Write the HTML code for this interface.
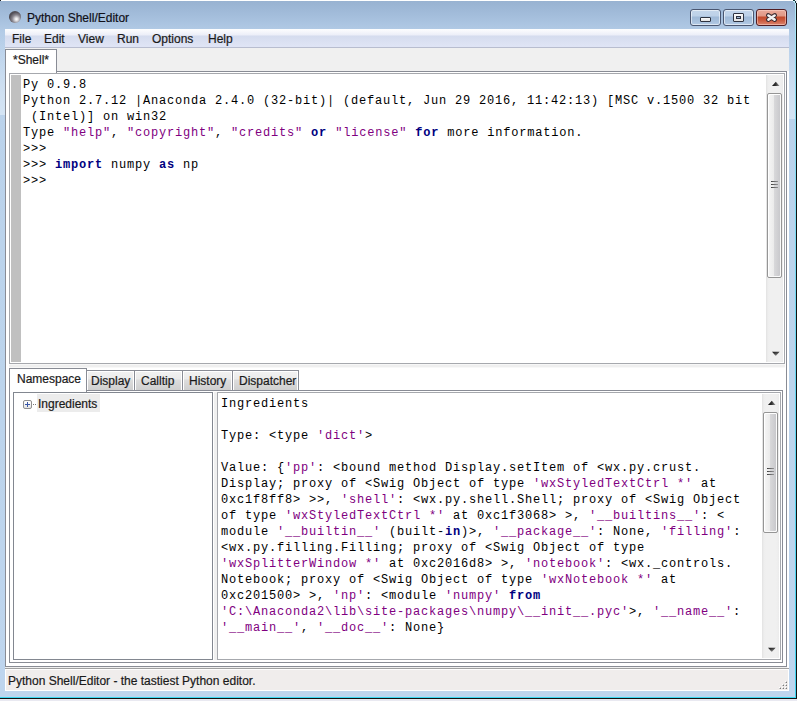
<!DOCTYPE html>
<html><head><meta charset="utf-8">
<style>
*{box-sizing:border-box;margin:0;padding:0}
html,body{width:797px;height:701px;overflow:hidden;background:#fff}
body{position:relative;font-family:"Liberation Sans",sans-serif;-webkit-text-stroke:0.2px currentColor}
.mono{-webkit-text-stroke:0}
.a{position:absolute}
#frame{left:0;top:1px;width:796px;height:697px;background:linear-gradient(#98b2d1,#a3bddb 14px,#b4cce7 32px,#bad2eb 80px,#bcd4ec 400px,#bed5ee)}
#rb{left:795px;top:3px;width:1px;height:695px;background:linear-gradient(#b4eaf8,#8fe0f4 60px,#62d6f0 400px,#3ed4f0)}
#rb2{left:796px;top:3px;width:1px;height:696px;background:#111}
#bb{left:0;top:697px;width:796px;height:1px;background:#3cd8f2}
#bb2{left:0;top:698px;width:797px;height:1px;background:#111}
#title{left:27px;top:11px;font-size:12px;color:#101018;white-space:nowrap}
#icon{left:9px;top:11px;width:12px;height:11.5px;border-radius:50%;background:radial-gradient(circle at 62% 68%,#fff 0,#e6e5e8 12%,#8a8790 38%,#56535b 62%,#38363c 100%)}
.tb{top:9px;width:31px;height:17px;border:1px solid #4a5670;border-radius:3px;background:linear-gradient(#c3d5ea,#bdd1e8 6px,#9fb9d7 7px,#a9c2de 12px,#b6cde7);box-shadow:inset 0 0 0 1px rgba(255,255,255,.55)}
#cl{background:linear-gradient(#e9a99a,#e09886 6px,#c24a2c 7px,#c9573b 10px,#dc8670)!important;border-color:#501c22!important;box-shadow:inset 0 0 0 1px rgba(255,220,210,.5)!important}
#client{left:5px;top:29px;width:784px;height:662px;background:#f0f0f0}
#menubar{left:5px;top:29px;width:784px;height:18px;background:linear-gradient(#fdfdfe,#eceef8 6px,#d5dcee 7px,#dfe4f5 17px)}
#menuline{left:5px;top:47px;width:784px;height:1px;background:#b8bdcf}
.mi{top:32px;font-size:12px;color:#1a1a1a;white-space:nowrap}
.pane{background:#fff}
.bd1{border:1px solid #898c95}
.bd2{border:1px solid #a6a8ad}
.bd3{border:1px solid #828790}
.mono{font-family:"Liberation Mono",monospace;font-size:12px;letter-spacing:0.8px;line-height:16px;white-space:pre;color:#000}
.itab{top:370px;height:20px;border:1px solid #898c95;border-bottom:none;background:linear-gradient(#f2f2f2,#ebebeb 8px,#dddddd 9px,#cfcfcf);box-shadow:inset 1px 1px 0 #fff,inset -1px 0 0 #fff}
.tt{top:374px;font-size:12px;color:#1a1a1a;white-space:nowrap}
.track{background:linear-gradient(to right,#e2e2e2,#eeeeee 2px,#f0f0f0 4px,#f0f0f0 calc(100% - 3px),#ececec)}
.up{width:0;height:0;border-left:4px solid transparent;border-right:4px solid transparent;border-bottom:4px solid #222}
.dn{width:0;height:0;border-left:4px solid transparent;border-right:4px solid transparent;border-top:4px solid #222}
.thumb{border:1px solid #959595;border-radius:2px;background:linear-gradient(to right,#f6f6f6,#ebebeb 44%,#d9d9db 45%,#c6c6ca);box-shadow:inset 1px 1px 0 #fff,inset -1px -1px 0 #fafafa}
.grip{width:7px;height:7px;background:linear-gradient(#3c3c3c,#3c3c3c 1px,transparent 1px,transparent 3px,#3c3c3c 3px,#3c3c3c 4px,transparent 4px,transparent 6px,#3c3c3c 6px);-webkit-mask:linear-gradient(to right,#000,rgba(0,0,0,.4))}
.k{color:#00007f;font-weight:bold}
.s{color:#7f007f}
</style></head><body>
<div id="frame" class="a"></div>
<div class="a" style="left:0;top:0;width:1px;height:1px;background:#222"></div><div id="rb" class="a"></div><div id="rb2" class="a"></div>
<div id="bb" class="a"></div><div id="bb2" class="a"></div>
<div class="a" style="left:796px;top:0;width:1px;height:3px;background:#e4ecf4"></div>
<div class="a" style="left:793px;top:0;width:2px;height:1px;background:#123438"></div>
<div class="a" style="left:795px;top:1px;width:1px;height:2px;background:#1a3a40"></div>
<div class="a" style="left:793px;top:1px;width:2px;height:1px;background:#c8f0fa"></div>
<div class="a" style="left:794px;top:2px;width:1px;height:1px;background:#c0eaf8"></div>
<div id="icon" class="a"></div>
<div id="title" class="a">Python Shell/Editor</div>
<div class="a tb" style="left:690px"></div>
<div class="a tb" style="left:723px"></div>
<div class="a tb" id="cl" style="left:756px"></div>
<div class="a" style="left:700px;top:17px;width:11px;height:5px;border:1px solid #2e3340;border-radius:1px;background:linear-gradient(#fafafa,#e2e2e2)"></div>
<div class="a" style="left:733px;top:13px;width:11px;height:9px;border:1px solid #2e3340;border-radius:1px;background:linear-gradient(#fafafa,#e4e4e4)"></div>
<div class="a" style="left:736px;top:16px;width:5px;height:3px;border:1px solid #2e3340;background:#9fb6d2"></div>
<svg class="a" style="left:764px;top:11px" width="15" height="13" viewBox="0 0 15 13">
<path d="M4.3 4.4 L10.7 8.7 M10.7 4.4 L4.3 8.7" stroke="#3b2b30" stroke-width="4.6" stroke-linecap="round" fill="none"/>
<path d="M4.4 4.5 L10.6 8.6 M10.6 4.5 L4.4 8.6" stroke="#f2f2f2" stroke-width="2.6" stroke-linecap="round" fill="none"/>
</svg>

<div class="a" style="left:0;top:36px;width:5px;height:79px;background:linear-gradient(rgba(205,223,242,0),#cfe0f2 70%,#d4e4f4)"></div>
<div class="a" style="left:789px;top:40px;width:6px;height:79px;background:linear-gradient(rgba(205,223,242,0),#cfe0f2 70%,#d4e4f4)"></div>
<div id="client" class="a"></div>
<div id="menubar" class="a"></div>
<div id="menuline" class="a"></div>
<div class="a mi" style="left:12px">File</div>
<div class="a mi" style="left:44px">Edit</div>
<div class="a mi" style="left:78px">View</div>
<div class="a mi" style="left:117px">Run</div>
<div class="a mi" style="left:152px">Options</div>
<div class="a mi" style="left:208px">Help</div>

<!-- top notebook page -->
<div class="a pane bd1" style="left:5px;top:71px;width:782px;height:596px"></div>
<!-- shell tab -->
<div class="a pane bd1" style="left:5px;top:49px;width:52px;height:24px;border-bottom:none"></div>
<div class="a" style="left:13px;top:53px;font-size:12px;color:#1a1a1a">*Shell*</div>

<!-- shell stc -->
<div class="a pane bd2" style="left:9px;top:73px;width:776px;height:291px"></div>
<div class="a" style="left:11px;top:75px;width:10px;height:287px;background:#c0c0c0"></div>
<div class="a mono" style="left:23px;top:77px">Py 0.9.8
Python 2.7.12 |Anaconda 2.4.0 (32-bit)| (default, Jun 29 2016, 11:42:13) [MSC v.1500 32 bit
 (Intel)] on win32
Type <span class="s">"help"</span>, <span class="s">"copyright"</span>, <span class="s">"credits"</span> <span class="k">or</span> <span class="s">"license"</span> <span class="k">for</span> more information.
&gt;&gt;&gt;
&gt;&gt;&gt; <span class="k">import</span> numpy <span class="k">as</span> np
&gt;&gt;&gt;</div>

<!-- sash -->
<div class="a" style="left:9px;top:364px;width:776px;height:4px;background:linear-gradient(#f7f7f7,#f7f7f7 1px,#efefef 1px,#efefef 3px,#f8f8f8 3px)"></div>

<!-- bottom notebook -->
<div class="a pane bd1" style="left:9px;top:390px;width:774px;height:273px"></div>
<div class="a pane bd1" style="left:9px;top:368px;width:78px;height:24px;border-bottom:none"></div>
<div class="a" style="left:17px;top:372px;font-size:12px;color:#1a1a1a">Namespace</div>
<div class="a itab" style="left:86px;width:49px"></div>
<div class="a itab" style="left:134px;width:49px"></div>
<div class="a itab" style="left:182px;width:51px"></div>
<div class="a itab" style="left:232px;width:67px"></div>
<div class="a tt" style="left:91px">Display</div>
<div class="a tt" style="left:141px">Calltip</div>
<div class="a tt" style="left:189px">History</div>
<div class="a tt" style="left:239px">Dispatcher</div>

<!-- tree -->
<div class="a pane bd3" style="left:13px;top:392px;width:200px;height:268px"></div>
<div class="a" style="left:23px;top:400px;width:9px;height:9px;border:1px solid #8f8f8f;border-radius:2px;background:linear-gradient(#fff,#f4f4f4 50%,#e4e4e4)"></div>
<div class="a" style="left:25px;top:404px;width:5px;height:1px;background:#3a58a8"></div>
<div class="a" style="left:27px;top:402px;width:1px;height:5px;background:#3a58a8"></div>
<div class="a" style="left:33px;top:404px;width:1px;height:1px;background:#777"></div>
<div class="a" style="left:35px;top:404px;width:1px;height:1px;background:#777"></div>
<div class="a" style="left:37px;top:394px;width:63px;height:18px;background:#ececec"></div>
<div class="a" style="left:38px;top:397px;font-size:12px;color:#1a1a1a;white-space:nowrap">Ingredients</div>
<div class="a" style="left:214px;top:392px;width:3px;height:268px;background:#f0f0f0"></div>
<!-- text ctrl -->
<div class="a pane bd2" style="left:217px;top:392px;width:564px;height:268px"></div>
<div class="a mono" style="left:221px;top:396px">Ingredients

Type: &lt;type <span class="s">'dict'</span>&gt;

Value: {<span class="s">'pp'</span>: &lt;bound method Display.setItem of &lt;wx.py.crust.
Display; proxy of &lt;Swig Object of type <span class="s">'wxStyledTextCtrl *'</span> at
0xc1f8ff8&gt; &gt;&gt;, <span class="s">'shell'</span>: &lt;wx.py.shell.Shell; proxy of &lt;Swig Object
of type <span class="s">'wxStyledTextCtrl *'</span> at 0xc1f3068&gt; &gt;, <span class="s">'__builtins__'</span>: &lt;
module <span class="s">'__builtin__'</span> (built-<span class="k">in</span>)&gt;, <span class="s">'__package__'</span>: None, <span class="s">'filling'</span>:
&lt;wx.py.filling.Filling; proxy of &lt;Swig Object of type
<span class="s">'wxSplitterWindow *'</span> at 0xc2016d8&gt; &gt;, <span class="s">'notebook'</span>: &lt;wx._controls.
Notebook; proxy of &lt;Swig Object of type <span class="s">'wxNotebook *'</span> at
0xc201500&gt; &gt;, <span class="s">'np'</span>: &lt;module <span class="s">'numpy'</span> <span class="k">from</span>
<span class="s">'C:\Anaconda2\lib\site-packages\numpy\__init__.pyc'</span>&gt;, <span class="s">'__name__'</span>:
<span class="s">'__main__'</span>, <span class="s">'__doc__'</span>: None}</div>


<!-- shell scrollbar -->
<div class="a track" style="left:766px;top:75px;width:17px;height:287px"></div>
<svg class="a" style="left:772px;top:81px" width="9" height="6" viewBox="0 0 9 6"><defs><linearGradient id="g77181" x1="0" x2="1" y1="0" y2="0"><stop offset="0" stop-color="#111"/><stop offset=".5" stop-color="#333"/><stop offset="1" stop-color="#9a9a9a"/></linearGradient></defs><path d="M0 5 L3.8 0.8 L7.6 5 Z" fill="url(#g77181)"/></svg>
<div class="a thumb" style="left:767px;top:93px;width:15px;height:185px"></div>
<div class="a grip" style="left:771px;top:181px"></div>
<svg class="a" style="left:772px;top:351px" width="9" height="6" viewBox="0 0 9 6"><defs><linearGradient id="g771351" x1="0" x2="0.6" y1="0" y2="1"><stop offset="0" stop-color="#111"/><stop offset=".6" stop-color="#555"/><stop offset="1" stop-color="#aaa"/></linearGradient></defs><path d="M0 0.8 L7.6 0.8 L3.8 5 Z" fill="url(#g771351)"/></svg>
<!-- text scrollbar -->
<div class="a track" style="left:762px;top:394px;width:17px;height:264px"></div>
<svg class="a" style="left:768px;top:400px" width="9" height="6" viewBox="0 0 9 6"><defs><linearGradient id="g767400" x1="0" x2="1" y1="0" y2="0"><stop offset="0" stop-color="#111"/><stop offset=".5" stop-color="#333"/><stop offset="1" stop-color="#9a9a9a"/></linearGradient></defs><path d="M0 5 L3.8 0.8 L7.6 5 Z" fill="url(#g767400)"/></svg>
<div class="a thumb" style="left:763px;top:412px;width:15px;height:121px"></div>
<div class="a grip" style="left:767px;top:468px"></div>
<svg class="a" style="left:768px;top:647px" width="9" height="6" viewBox="0 0 9 6"><defs><linearGradient id="g767647" x1="0" x2="0.6" y1="0" y2="1"><stop offset="0" stop-color="#111"/><stop offset=".6" stop-color="#555"/><stop offset="1" stop-color="#aaa"/></linearGradient></defs><path d="M0 0.8 L7.6 0.8 L3.8 5 Z" fill="url(#g767647)"/></svg>
<div class="a" style="left:787px;top:71px;width:2px;height:597px;background:#fff"></div>
<!-- status bar -->
<div class="a" style="left:5px;top:668px;width:784px;height:1px;background:#a0a0a0"></div>
<div class="a" style="left:5px;top:669px;width:784px;height:22px;background:#fff"></div>
<div class="a" style="left:6px;top:670px;width:782px;height:20px;background:#f0edec"></div>
<div class="a" style="left:8px;top:674px;font-size:12px;color:#1a1a1a;white-space:nowrap">Python Shell/Editor - the tastiest Python editor.</div>
<div class="a" style="left:785px;top:681px;width:2px;height:2px;background:#fff"></div><div class="a" style="left:786px;top:682px;width:1px;height:1px;background:#7a7a7a"></div><div class="a" style="left:786px;top:681px;width:1px;height:1px;background:#c8c8c8"></div><div class="a" style="left:785px;top:682px;width:1px;height:1px;background:#c8c8c8"></div><div class="a" style="left:782px;top:684px;width:2px;height:2px;background:#fff"></div><div class="a" style="left:783px;top:685px;width:1px;height:1px;background:#7a7a7a"></div><div class="a" style="left:783px;top:684px;width:1px;height:1px;background:#c8c8c8"></div><div class="a" style="left:782px;top:685px;width:1px;height:1px;background:#c8c8c8"></div><div class="a" style="left:785px;top:684px;width:2px;height:2px;background:#fff"></div><div class="a" style="left:786px;top:685px;width:1px;height:1px;background:#7a7a7a"></div><div class="a" style="left:786px;top:684px;width:1px;height:1px;background:#c8c8c8"></div><div class="a" style="left:785px;top:685px;width:1px;height:1px;background:#c8c8c8"></div><div class="a" style="left:779px;top:687px;width:2px;height:2px;background:#fff"></div><div class="a" style="left:780px;top:688px;width:1px;height:1px;background:#7a7a7a"></div><div class="a" style="left:780px;top:687px;width:1px;height:1px;background:#c8c8c8"></div><div class="a" style="left:779px;top:688px;width:1px;height:1px;background:#c8c8c8"></div><div class="a" style="left:782px;top:687px;width:2px;height:2px;background:#fff"></div><div class="a" style="left:783px;top:688px;width:1px;height:1px;background:#7a7a7a"></div><div class="a" style="left:783px;top:687px;width:1px;height:1px;background:#c8c8c8"></div><div class="a" style="left:782px;top:688px;width:1px;height:1px;background:#c8c8c8"></div><div class="a" style="left:785px;top:687px;width:2px;height:2px;background:#fff"></div><div class="a" style="left:786px;top:688px;width:1px;height:1px;background:#7a7a7a"></div><div class="a" style="left:786px;top:687px;width:1px;height:1px;background:#c8c8c8"></div><div class="a" style="left:785px;top:688px;width:1px;height:1px;background:#c8c8c8"></div>
<div class="a" style="left:0;top:699px;width:797px;height:2px;background:#e9e9f1"></div>
</body></html>
